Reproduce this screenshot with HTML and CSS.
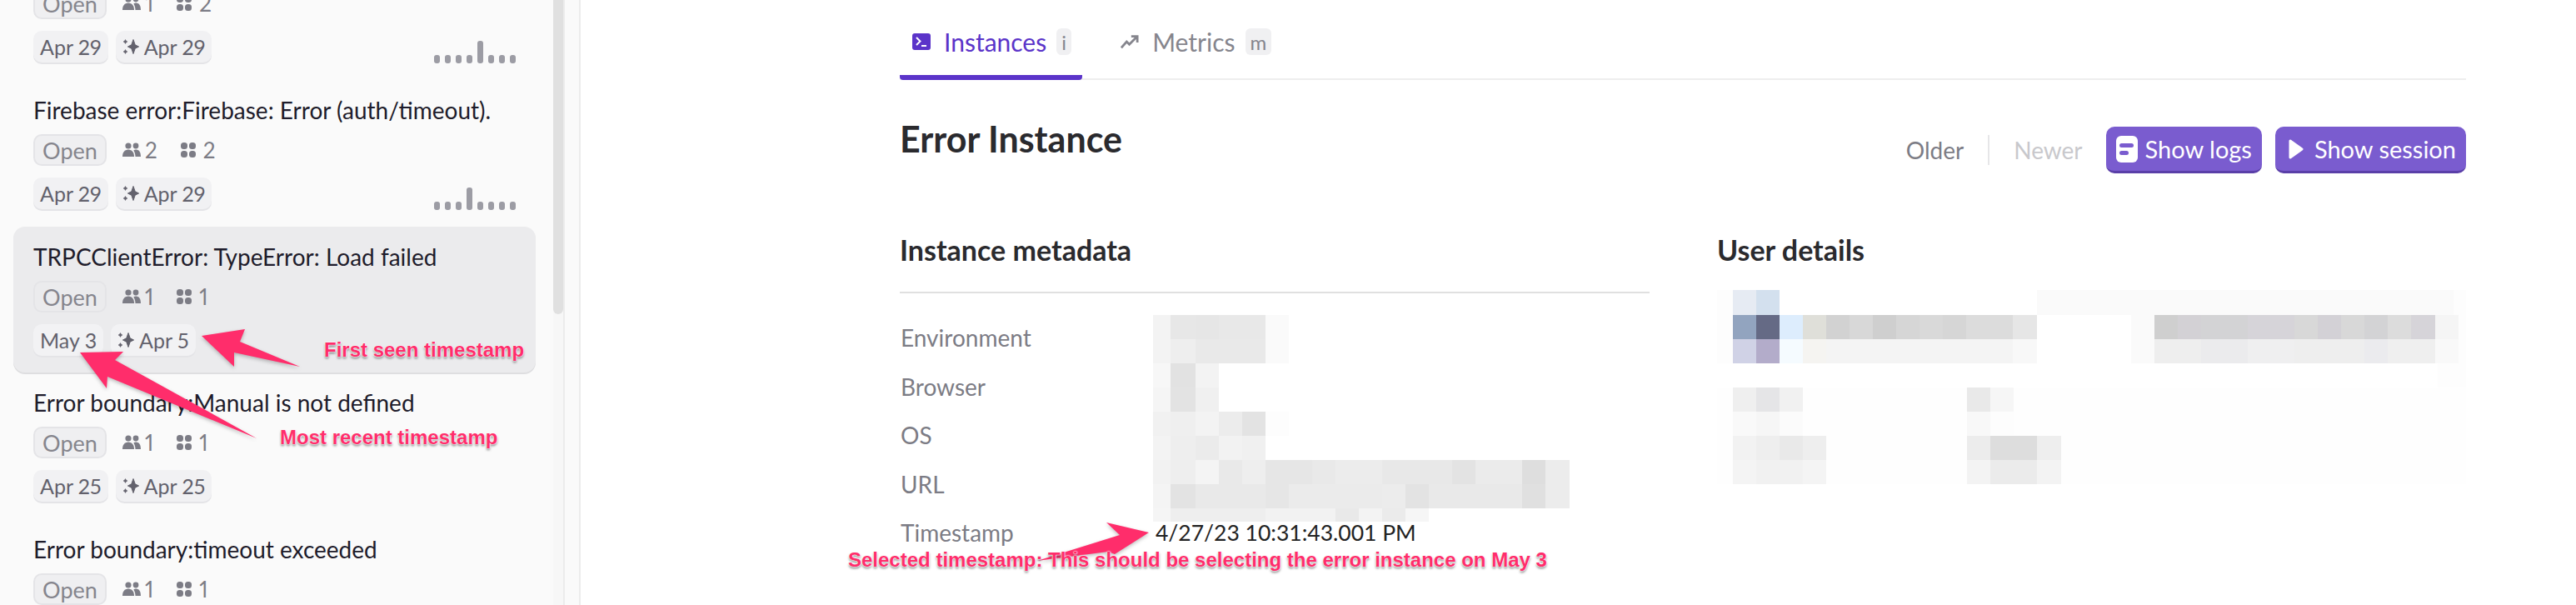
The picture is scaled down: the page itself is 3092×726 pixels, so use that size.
FILE: index.html
```html
<!DOCTYPE html>
<html lang="en">
<head>
    <meta charset="UTF-8">
    <title>Error Instance</title>
    <link rel="stylesheet" href="styles.css">
</head>
<body>
    <svg class="icon-defs" width="0" height="0">
        <symbol id="i-users" viewBox="0 0 24 18">
            <circle cx="8" cy="4" r="3.6"/><circle cx="17" cy="4" r="3.4"/>
            <path d="M1 17c0-5 2.500-8.500 7-8.500s7 3.500 7 8.500z"/>
            <path d="M16.500 17c0-3-.7-5.500-2.200-7.600.8-.6 1.800-.9 3-.9 4 0 5.700 3.500 5.700 8.500z"/>
        </symbol>
        <symbol id="i-grid" viewBox="0 0 18 18">
            <rect x="0" y="0" width="8" height="8" rx="3.500"/><rect x="10" y="0" width="8" height="8" rx="3.500"/>
            <rect x="0" y="10" width="8" height="8" rx="3.500"/><rect x="10" y="10" width="8" height="8" rx="3.500"/>
        </symbol>
        <symbol id="i-spark" viewBox="0 0 20 20">
            <path d="M13 1.500L15.200 7.800L19.600 10L15.200 12.200L13 18.500L10.800 12.200L6.400 10L10.800 7.800Z" stroke-width="1" stroke-linejoin="round"/>
            <path d="M3.500 1.500L4.400 3.100L6 4L4.400 4.900L3.500 6.500L2.600 4.900L1 4L2.600 3.100Z"/>
            <path d="M3.500 13.500L4.400 15.100L6 16L4.400 16.900L3.500 18.500L2.600 16.900L1 16L2.600 15.100Z"/>
        </symbol>
    </svg>

    <div class="app">
        <aside class="sidebar">
            <div class="issue-list">
                <div class="issue">
                    <div class="meta-row">
                        <span class="status">Open</span>
                        <span class="count"><svg class="ic-users"><use href="#i-users"/></svg>1</span>
                        <span class="count"><svg class="ic-grid"><use href="#i-grid"/></svg>2</span>
                    </div>
                    <div class="date-row">
                        <span class="date">Apr 29</span>
                        <span class="date"><svg class="ic-spark"><use href="#i-spark"/></svg>Apr 29</span>
                        <div class="spark">
                            <i></i><i></i><i></i><i></i><i class="tall"></i><i></i><i></i><i></i>
                        </div>
                    </div>
                </div>

                <div class="issue">
                    <div class="issue-title">Firebase error:Firebase: Error (auth/timeout).</div>
                    <div class="meta-row">
                        <span class="status">Open</span>
                        <span class="count"><svg class="ic-users"><use href="#i-users"/></svg>2</span>
                        <span class="count"><svg class="ic-grid"><use href="#i-grid"/></svg>2</span>
                    </div>
                    <div class="date-row">
                        <span class="date">Apr 29</span>
                        <span class="date"><svg class="ic-spark"><use href="#i-spark"/></svg>Apr 29</span>
                        <div class="spark">
                            <i></i><i></i><i></i><i class="tall"></i><i></i><i></i><i></i><i></i>
                        </div>
                    </div>
                </div>

                <div class="issue selected">
                    <div class="issue-title">TRPCClientError: TypeError: Load failed</div>
                    <div class="meta-row">
                        <span class="status">Open</span>
                        <span class="count"><svg class="ic-users"><use href="#i-users"/></svg>1</span>
                        <span class="count"><svg class="ic-grid"><use href="#i-grid"/></svg>1</span>
                    </div>
                    <div class="date-row">
                        <span class="date">May 3</span>
                        <span class="date"><svg class="ic-spark"><use href="#i-spark"/></svg>Apr 5</span>
                    </div>
                </div>

                <div class="issue">
                    <div class="issue-title">Error boundary:Manual is not defined</div>
                    <div class="meta-row">
                        <span class="status">Open</span>
                        <span class="count"><svg class="ic-users"><use href="#i-users"/></svg>1</span>
                        <span class="count"><svg class="ic-grid"><use href="#i-grid"/></svg>1</span>
                    </div>
                    <div class="date-row">
                        <span class="date">Apr 25</span>
                        <span class="date"><svg class="ic-spark"><use href="#i-spark"/></svg>Apr 25</span>
                    </div>
                </div>

                <div class="issue">
                    <div class="issue-title">Error boundary:timeout exceeded</div>
                    <div class="meta-row">
                        <span class="status">Open</span>
                        <span class="count"><svg class="ic-users"><use href="#i-users"/></svg>1</span>
                        <span class="count"><svg class="ic-grid"><use href="#i-grid"/></svg>1</span>
                    </div>
                </div>
            </div>
            <div class="scrollbar"><div class="scroll-thumb"></div></div>
        </aside>
        <div class="gutter"></div>

        <main class="main">
            <nav class="tabs">
                <a class="tab active">
                    <svg class="tab-icon" viewBox="0 0 22 20">
                        <rect width="22" height="20" rx="3" fill="#5b34c9"/>
                        <path d="M5 5l4.500 4.500L5 14M11 15h6" fill="none" stroke="#fff" stroke-width="2"/>
                    </svg>
                    <span class="tab-name">Instances</span><kbd>i</kbd>
                </a>
                <a class="tab">
                    <svg class="tab-icon" viewBox="0 0 24 20">
                        <path d="M1 18l7-8 3.500 3.500L21 4M14 3h8v8" fill="none" stroke="#85858d" stroke-width="3"/>
                    </svg>
                    <span class="tab-name">Metrics</span><kbd>m</kbd>
                </a>
            </nav>

            <header class="instance-head">
                <h1>Error Instance</h1>
                <div class="actions">
                    <span class="pager">Older</span>
                    <span class="pager-sep"></span>
                    <span class="pager off">Newer</span>
                    <button class="btn">
                        <svg class="btn-icon" viewBox="0 0 26 32">
                            <rect width="26" height="32" rx="6" fill="#fff"/>
                            <rect x="4" y="9" width="17" height="5" rx="2.500" fill="#7a5ccf"/>
                            <rect x="4" y="18" width="11" height="5" rx="2.500" fill="#7a5ccf"/>
                        </svg>
                        Show logs
                    </button>
                    <button class="btn">
                        <svg class="btn-icon play" viewBox="0 0 18 26">
                            <path d="M2 3l14 10L2 23z" fill="#fff" stroke="#fff" stroke-width="3" stroke-linejoin="round"/>
                        </svg>
                        Show session
                    </button>
                </div>
            </header>

            <div class="columns">
                <section class="col-left">
                    <h2 class="ruled">Instance metadata</h2>
                    <div class="meta-grid">
                        <span class="meta-label">Environment</span>
                        <div class="meta-blur">
                            <svg width="500" height="250" shape-rendering="crispEdges">
                                <g>
                                    <rect x="0" y="0" width="21" height="29" fill="#f3f3f3"/><rect x="21" y="0" width="30" height="29" fill="#e7e7e7"/><rect x="51" y="0" width="28" height="29" fill="#e6e6e6"/><rect x="79" y="0" width="56" height="29" fill="#e8e8e8"/><rect x="135" y="0" width="28" height="29" fill="#fafafa"/>
                                    <rect x="0" y="29" width="21" height="29" fill="#f3f3f3"/><rect x="21" y="29" width="30" height="29" fill="#eeeeee"/><rect x="51" y="29" width="84" height="29" fill="#e9e9e9"/><rect x="135" y="29" width="28" height="29" fill="#fafafa"/>
                                    <rect x="0" y="58" width="21" height="29" fill="#f7f7f7"/><rect x="21" y="58" width="30" height="29" fill="#e2e2e2"/><rect x="51" y="58" width="28" height="29" fill="#f3f3f3"/>
                                    <rect x="0" y="87" width="21" height="29" fill="#f5f5f5"/><rect x="21" y="87" width="30" height="29" fill="#e3e3e3"/><rect x="51" y="87" width="28" height="29" fill="#f0f0f0"/>
                                    <rect x="0" y="116" width="21" height="29" fill="#f1f1f1"/><rect x="21" y="116" width="30" height="29" fill="#efefef"/><rect x="51" y="116" width="28" height="29" fill="#f3f3f3"/><rect x="79" y="116" width="28" height="29" fill="#ececec"/><rect x="107" y="116" width="28" height="29" fill="#e3e3e3"/><rect x="135" y="116" width="28" height="29" fill="#fdfdfd"/>
                                    <rect x="0" y="145" width="21" height="29" fill="#f3f3f3"/><rect x="21" y="145" width="30" height="29" fill="#eeeeee"/><rect x="51" y="145" width="28" height="29" fill="#ebebeb"/><rect x="79" y="145" width="28" height="29" fill="#f2f2f2"/><rect x="107" y="145" width="28" height="29" fill="#f0f0f0"/>
                                    <rect x="0" y="174" width="21" height="29" fill="#f2f2f2"/><rect x="21" y="174" width="30" height="29" fill="#eeeeee"/><rect x="51" y="174" width="28" height="29" fill="#f4f4f4"/><rect x="79" y="174" width="28" height="29" fill="#e9e9e9"/><rect x="107" y="174" width="28" height="29" fill="#eeeeee"/><rect x="135" y="174" width="56" height="29" fill="#e6e6e6"/><rect x="191" y="174" width="28" height="29" fill="#e9e9e9"/><rect x="219" y="174" width="56" height="29" fill="#ececec"/><rect x="275" y="174" width="84" height="29" fill="#e8e8e8"/><rect x="359" y="174" width="28" height="29" fill="#e3e3e3"/><rect x="387" y="174" width="56" height="29" fill="#ebebeb"/><rect x="443" y="174" width="28" height="29" fill="#dedede"/><rect x="471" y="174" width="29" height="29" fill="#ececec"/>
                                    <rect x="0" y="203" width="21" height="29" fill="#f4f4f4"/><rect x="21" y="203" width="30" height="29" fill="#e3e3e3"/><rect x="51" y="203" width="84" height="29" fill="#e9e9e9"/><rect x="135" y="203" width="28" height="29" fill="#e6e6e6"/><rect x="163" y="203" width="112" height="29" fill="#ebebeb"/><rect x="275" y="203" width="28" height="29" fill="#ececec"/><rect x="303" y="203" width="28" height="29" fill="#e3e3e3"/><rect x="331" y="203" width="112" height="29" fill="#e9e9e9"/><rect x="443" y="203" width="28" height="29" fill="#e0e0e0"/><rect x="471" y="203" width="29" height="29" fill="#ececec"/>
                                    <rect x="0" y="232" width="21" height="16" fill="#f5f5f5"/><rect x="21" y="232" width="114" height="16" fill="#eeeeee"/><rect x="135" y="232" width="84" height="16" fill="#f2f2f2"/><rect x="219" y="232" width="28" height="16" fill="#e9e9e9"/><rect x="247" y="232" width="28" height="16" fill="#f3f3f3"/><rect x="275" y="232" width="28" height="16" fill="#ebebeb"/><rect x="303" y="232" width="28" height="16" fill="#f6f6f6"/>
                                </g>
                            </svg>
                        </div>
                        <span class="meta-label">Browser</span>
                        <span class="meta-label">OS</span>
                        <span class="meta-label">URL</span>
                        <span class="meta-label">Timestamp</span>
                        <span class="meta-value">4/27/23 10:31:43.001 PM</span>
                    </div>
                </section>

                <section class="col-right">
                    <h2>User details</h2>
                    <svg class="user-blur" width="899" height="280" shape-rendering="crispEdges">
                        <rect x="0" y="18" width="899" height="232" fill="#fdfdfd"/>
                        <rect x="19" y="18" width="28" height="30" fill="#e6ebf3"/><rect x="47" y="18" width="28" height="30" fill="#d3e0ee"/><rect x="75" y="18" width="309" height="30" fill="#fff"/><rect x="384" y="18" width="500" height="30" fill="#fafafa"/>
                        <rect x="19" y="48" width="28" height="29" fill="#92a4bf"/><rect x="47" y="48" width="28" height="29" fill="#656a85"/><rect x="75" y="48" width="28" height="29" fill="#ddedfd"/><rect x="103" y="48" width="28" height="29" fill="#dfdfd9"/><rect x="131" y="48" width="28" height="29" fill="#d2d2d2"/><rect x="159" y="48" width="28" height="29" fill="#d8d8d8"/><rect x="187" y="48" width="28" height="29" fill="#cfcfcf"/><rect x="215" y="48" width="28" height="29" fill="#d6d6d6"/><rect x="243" y="48" width="28" height="29" fill="#d9d9d9"/><rect x="271" y="48" width="28" height="29" fill="#d6d6d6"/><rect x="299" y="48" width="56" height="29" fill="#dcdcdc"/><rect x="355" y="48" width="29" height="29" fill="#e6e6e6"/>
                        <rect x="384" y="48" width="141" height="29" fill="#fff"/><rect x="497" y="48" width="28" height="29" fill="#fafafa"/>
                        <rect x="525" y="48" width="28" height="29" fill="#cfcfcf"/><rect x="553" y="48" width="28" height="29" fill="#d3d1d5"/><rect x="581" y="48" width="56" height="29" fill="#d3d3d5"/><rect x="637" y="48" width="56" height="29" fill="#d6d4d9"/><rect x="693" y="48" width="28" height="29" fill="#d8d8d8"/><rect x="721" y="48" width="28" height="29" fill="#d3d1d6"/><rect x="749" y="48" width="28" height="29" fill="#d8d8d8"/><rect x="777" y="48" width="28" height="29" fill="#d3d3d5"/><rect x="805" y="48" width="28" height="29" fill="#dcdcdc"/><rect x="833" y="48" width="29" height="29" fill="#d6d4d9"/><rect x="862" y="48" width="28" height="29" fill="#f5f5f5"/>
                        <rect x="19" y="77" width="28" height="29" fill="#d0d2e6"/><rect x="47" y="77" width="28" height="29" fill="#b3acca"/><rect x="75" y="77" width="28" height="29" fill="#f5fbff"/><rect x="103" y="77" width="28" height="29" fill="#f5f4f1"/><rect x="131" y="77" width="224" height="29" fill="#f4f4f4"/><rect x="355" y="77" width="29" height="29" fill="#f8f8f8"/>
                        <rect x="384" y="77" width="141" height="29" fill="#fff"/><rect x="497" y="77" width="28" height="29" fill="#fafafa"/>
                        <rect x="525" y="77" width="56" height="29" fill="#eeeeee"/><rect x="581" y="77" width="56" height="29" fill="#ebebed"/><rect x="637" y="77" width="56" height="29" fill="#efeff0"/><rect x="693" y="77" width="84" height="29" fill="#eeeeee"/><rect x="777" y="77" width="28" height="29" fill="#ebebee"/><rect x="805" y="77" width="57" height="29" fill="#efefef"/><rect x="862" y="77" width="28" height="29" fill="#f9f9f9"/>
                        <rect x="0" y="106" width="525" height="29" fill="#fff"/><rect x="525" y="106" width="340" height="29" fill="#fff"/>
                        <rect x="0" y="135" width="899" height="116" fill="#fefefe"/>
                        <rect x="19" y="135" width="28" height="29" fill="#efefef"/><rect x="47" y="135" width="28" height="29" fill="#e5e5e7"/><rect x="75" y="135" width="28" height="29" fill="#f1f1f1"/><rect x="300" y="135" width="28" height="29" fill="#e9e9e9"/><rect x="328" y="135" width="28" height="29" fill="#f6f6f6"/>
                        <rect x="19" y="164" width="28" height="29" fill="#f9f9f9"/><rect x="47" y="164" width="28" height="29" fill="#f6f6f6"/><rect x="75" y="164" width="28" height="29" fill="#fbfbfb"/><rect x="300" y="164" width="28" height="29" fill="#f8f8f8"/><rect x="328" y="164" width="28" height="29" fill="#fdfdfd"/>
                        <rect x="19" y="193" width="28" height="29" fill="#f2f2f2"/><rect x="47" y="193" width="28" height="29" fill="#eeeeee"/><rect x="75" y="193" width="28" height="29" fill="#e9e9e9"/><rect x="103" y="193" width="28" height="29" fill="#eeeeee"/><rect x="300" y="193" width="28" height="29" fill="#ececec"/><rect x="328" y="193" width="56" height="29" fill="#dddddd"/><rect x="384" y="193" width="29" height="29" fill="#eeeeee"/>
                        <rect x="19" y="222" width="28" height="29" fill="#f4f4f4"/><rect x="47" y="222" width="56" height="29" fill="#f1f1f1"/><rect x="103" y="222" width="28" height="29" fill="#f4f4f4"/><rect x="300" y="222" width="28" height="29" fill="#f3f3f3"/><rect x="328" y="222" width="56" height="29" fill="#ebebeb"/><rect x="384" y="222" width="29" height="29" fill="#f3f3f3"/>
                    </svg>
                </section>
            </div>
        </main>
    </div>

    <!-- screenshot annotations drawn on top of the page -->
    <svg class="arrows" width="3092" height="726">
        <path d="M242 403L294 395L288 410L360 440L281 423L281 440Z"/>
        <path d="M96 423L148 422L138 432L308 526L129 452L128 466Z"/>
        <path d="M1379 639L1328 627L1344 642L1245 673L1330 662L1338 665Z"/>
    </svg>
    <span class="note note-first">First seen timestamp</span>
    <span class="note note-recent">Most recent timestamp</span>
    <span class="note note-selected">Selected timestamp: This should be selecting the error instance on May 3</span>
</body>
</html>
```

FILE: styles.css
```css
* {
    box-sizing: border-box;
}
html, body {
    margin: 0;
    height: 726px;
    overflow: hidden;
    background: #fff;
}
body {
    position: relative;
    font-family: Lato, Roboto, sans-serif;
    font-size: 26px;
    color: #1e1c2b;
}
.icon-defs {
    position: absolute;
}
.app {
    display: flex;
    height: 726px;
}

/* left list */
.sidebar {
    display: flex;
    width: 678px;
    height: 726px;
    overflow: hidden;
    background: #fafafa;
    border-right: 2px solid #ececec;
}
.issue-list {
    width: 664px;
    margin-top: -15px;
    padding-left: 16px;
}
.issue {
    width: 627px;
    padding: 20px 24px 21px;
}
.issue:first-child {
    padding-top: 0;
}
.issue.selected {
    background: #ebebed;
    border-radius: 14px;
    box-shadow: 0 2px 0 #dedee0;
    height: 175px;
}
.issue-title {
    height: 32px;
    line-height: 32px;
    margin-bottom: 13px;
    font-size: 28px;
    white-space: nowrap;
}
.meta-row, .date-row {
    display: flex;
    align-items: center;
    height: 38px;
    color: #7c7c85;
    font-variant-numeric: proportional-nums;
}
.date-row {
    margin-top: 14px;
    gap: 9px;
}
.status {
    display: flex;
    align-items: center;
    justify-content: center;
    width: 88px;
    height: 38px;
    margin-right: 18px;
    border: 2px solid #e4e4e7;
    border-radius: 10px;
    background: #efeff1;
    color: #85858d;
    font-size: 27px;
}
.selected .status {
    background: #ebebed;
}
.count {
    display: flex;
    align-items: center;
    gap: 4px;
    margin-right: 28px;
}
.ic-users {
    width: 24px;
    height: 18px;
    fill: #7c7c85;
}
.ic-grid {
    width: 18px;
    height: 18px;
    margin-right: 5px;
    fill: #7c7c85;
}
.date {
    display: flex;
    align-items: center;
    gap: 6px;
    height: 38px;
    padding: 0 8px;
    border-radius: 10px;
    background: #f1f1f3;
    box-shadow: 0 2px 0 #e4e4e7;
    color: #62616c;
    font-size: 25px;
}
.selected .date {
    background: #f2f2f4;
}
.ic-spark {
    width: 20px;
    height: 20px;
    fill: #62616c;
    stroke: #62616c;
    stroke-width: 0.5;
}
.spark {
    display: flex;
    align-items: flex-end;
    gap: 6px;
    margin-left: auto;
    height: 38px;
    margin-bottom: -1px;
}
.spark i {
    display: block;
    width: 7px;
    height: 10px;
    border-radius: 3px;
    background: #9c9ca4;
}
.spark i.tall {
    height: 27px;
}
.scrollbar {
    width: 12px;
    background: #f7f7f7;
}
.scroll-thumb {
    height: 377px;
    background: #e0e0e0;
    border-radius: 0 0 6px 6px;
}
.gutter {
    width: 19px;
    background: #fafafa;
    border-right: 2px solid #ececec;
}

/* main area */
.main {
    width: 1880px;
    margin-left: 383px;
}
.tabs {
    display: flex;
    height: 96px;
    border-bottom: 2px solid #eeeeee;
}
.tab {
    display: flex;
    align-items: center;
    height: 96px;
    padding: 4px 13px 0 15px;
    margin-right: 31px;
    color: #85858d;
    font-size: 30px;
}
.tab.active {
    color: #5b34c9;
    border-bottom: 6px solid #5b34c9;
    border-radius: 0 0 4px 4px;
    padding-top: 10px;
}
.tab-icon {
    width: 22px;
    height: 20px;
    margin-right: 16px;
}
kbd {
    display: inline-flex;
    align-items: center;
    justify-content: center;
    min-width: 18px;
    height: 32px;
    padding: 0 6px;
    margin-left: 12px;
    border-radius: 6px;
    background: #f0f0f2;
    color: #85858d;
    font-family: inherit;
    font-size: 24px;
}
.instance-head {
    display: flex;
    justify-content: space-between;
    align-items: flex-start;
    margin-top: 56px;
    height: 56px;
}
h1 {
    margin: 0;
    font-size: 43px;
    line-height: 30px;
    font-weight: 700;
    color: #2a2a2e;
}
.actions {
    display: flex;
    align-items: center;
    height: 56px;
}
.pager {
    color: #7c7c85;
    font-size: 28px;
}
.pager.off {
    color: #c8c8cc;
    margin-right: 28px;
}
.pager-sep {
    width: 2px;
    height: 36px;
    margin: 0 29px;
    background: #e6e6e8;
}
.btn {
    display: flex;
    align-items: center;
    gap: 9px;
    height: 56px;
    margin-left: 16px;
    padding: 0 12px;
    border: 0;
    border-bottom: 3px solid #5a3fa8;
    border-radius: 10px;
    background: #7a5ccf;
    color: #fff;
    font-family: inherit;
    font-size: 29px;
}
.pager.off + .btn {
    margin-left: 0;
}
.btn-icon {
    width: 26px;
    height: 32px;
}
.btn-icon.play {
    width: 18px;
    height: 26px;
    margin: 0 4px 0 4px;
}
.columns {
    display: flex;
    gap: 81px;
    margin-top: 72px;
}
.col-left {
    width: 900px;
}
.col-right {
    width: 899px;
}
h2 {
    margin: 0;
    height: 40px;
    line-height: 40px;
    font-size: 34px;
    font-weight: 700;
    color: #2a2a2e;
}
h2.ruled {
    height: 72px;
    padding-bottom: 30px;
    border-bottom: 2px solid #e0e0e0;
}
.meta-grid {
    display: grid;
    grid-template-columns: 303px 1fr;
    grid-auto-flow: column;
    grid-template-rows: repeat(5, 58.5px);
    margin-top: 24px;
    padding-left: 1px;
}
.meta-label {
    grid-column: 1;
    align-self: center;
    color: #7c7c85;
    font-size: 28px;
}
.meta-blur {
    grid-column: 2;
    grid-row: 1 / span 4;
    padding-top: 2px;
    height: 234px;
}
.meta-value {
    grid-column: 2;
    grid-row: 5;
    align-self: center;
    padding-left: 3px;
    color: #222;
    font-size: 26.5px;
}
.user-blur {
    display: block;
    margin-top: 10px;
}

/* annotations */
.arrows {
    position: absolute;
    top: 0;
    left: 0;
    fill: #ff2d6b;
    filter: drop-shadow(0 2px 2px rgba(0, 0, 0, 0.25));
}
.note {
    position: absolute;
    font-family: "Liberation Sans", Arial, sans-serif;
    font-weight: 700;
    font-size: 24px;
    line-height: 26px;
    white-space: nowrap;
    color: #ff2d6b;
    text-shadow: 0 0 2px #fff, 0 0 2px #fff, 0 0 1px #fff, 0 2px 3px rgba(0, 0, 0, 0.55);
}
.note-first {
    left: 389px;
    top: 407px;
}
.note-recent {
    left: 336px;
    top: 512px;
}
.note-selected {
    left: 1018px;
    top: 659px;
}
```
